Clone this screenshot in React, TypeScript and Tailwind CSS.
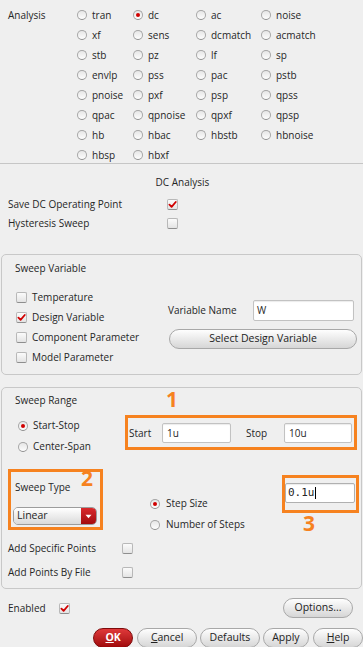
import React from "react";

const analyses = [
  ["tran", "dc", "ac", "noise"],
  ["xf", "sens", "dcmatch", "acmatch"],
  ["stb", "pz", "lf", "sp"],
  ["envlp", "pss", "pac", "pstb"],
  ["pnoise", "pxf", "psp", "qpss"],
  ["qpac", "qpnoise", "qpxf", "qpsp"],
  ["hb", "hbac", "hbstb", "hbnoise"],
  ["hbsp", "hbxf"],
];

function Radio({ checked = false }: { checked?: boolean }) {
  return (
    <span className="inline-flex h-[10px] w-[10px] shrink-0 items-center justify-center rounded-full border border-[#a6a6a6] border-b-[#8c8c8c] bg-linear-to-b from-[#e6e6e6] to-[#fdfdfd]">
      {checked && <span className="h-[4px] w-[4px] rounded-full bg-[#d00000]" />}
    </span>
  );
}

function Check({ checked = false }: { checked?: boolean }) {
  return (
    <span className="inline-flex h-[11px] w-[11px] shrink-0 items-center justify-center rounded-[2px] border border-[#b8b8b8] border-b-[#8e8e8e] bg-linear-to-b from-[#fbfbfb] to-[#e4e4e4]">
      {checked && (
        <svg width="9" height="9" viewBox="0 0 10 10">
          <path d="M1.6 5.2 L4 7.6 L8.6 2.2" fill="none" stroke="#d00000" strokeWidth="2" strokeLinecap="round" strokeLinejoin="round" />
        </svg>
      )}
    </span>
  );
}

function Field({ value, className = "" }: { value: string; className?: string }) {
  return (
    <div className={`flex items-center rounded-[2px] border border-[#c2c2c2] bg-white shadow-[inset_0_1px_1px_rgba(0,0,0,0.08)] ${className}`}>
      {value}
    </div>
  );
}

function Btn({ children, className = "" }: { children: React.ReactNode; className?: string }) {
  return (
    <button className={`flex h-[20px] items-center justify-center rounded-full border border-[#a8a8a8] bg-linear-to-b from-[#fefefe] to-[#d6d6d6] text-[10.5px] text-[#222] ${className}`}>
      {children}
    </button>
  );
}

export default function App() {
  return (
    <div className="relative flex h-[647px] w-[363px] flex-col overflow-hidden bg-[#efefef] font-['Open_Sans','Noto_Sans',sans-serif] text-[10px] text-[#262626]">
      {/* analysis chooser */}
      <div className="flex h-[163px] shrink-0 pt-[5px]">
        <div className="flex h-[20px] w-[77px] items-center pl-2">Analysis</div>
        <div className="grid h-[160px] grid-cols-[56px_63px_65px_1fr] auto-rows-[20px]">
          {analyses.flat().map((name) => (
            <div key={name} className="flex items-center gap-[5px]">
              <Radio checked={name === "dc"} />
              <span>{name}</span>
            </div>
          ))}
        </div>
      </div>
      <div className="h-px shrink-0 bg-[#c6c6c6]" />

      <div className="mt-[8px] flex h-[20px] shrink-0 items-center justify-center pl-[2px]">DC Analysis</div>
      <div className="mt-[2px] flex h-[20px] shrink-0 items-center pl-2">
        <span className="w-[159px]">Save DC Operating Point</span>
        <Check checked />
      </div>
      <div className="flex h-[18px] shrink-0 items-center pl-2">
        <span className="w-[159px]">Hysteresis Sweep</span>
        <Check />
      </div>

      {/* sweep variable */}
      <div className="mx-px mt-[22px] h-[121px] shrink-0 rounded-[5px] border border-[#c8c8c8]">
        <div className="flex h-[26px] items-center pl-[13px]">Sweep Variable</div>
        <div className="mt-[6px] flex">
          <div className="flex w-[166px] flex-col pl-[14px]">
            {[
              ["Temperature", false],
              ["Design Variable", true],
              ["Component Parameter", false],
              ["Model Parameter", false],
            ].map(([label, on]) => (
              <div key={label as string} className="flex h-[20px] items-center gap-[5px]">
                <Check checked={on as boolean} />
                <span>{label}</span>
              </div>
            ))}
          </div>
          <div className="flex flex-col pt-[13px]">
            <div className="flex h-[21px] items-center">
              <span className="w-[85px]">Variable Name</span>
              <Field value="W" className="h-[21px] w-[101px] pl-[3px]" />
            </div>
            <Btn className="mt-[8px] ml-px h-[17px] w-[188px]">Select Design Variable</Btn>
          </div>
        </div>
      </div>

      {/* sweep range */}
      <div className="mx-px mt-[12px] h-[202px] shrink-0 rounded-[5px] border border-[#c8c8c8]">
        <div className="flex h-[25px] items-center pl-[13px]">Sweep Range</div>
        <div className="flex h-[44px]">
          <div className="flex w-[125px] flex-col pt-[2px] pl-[16px]">
            <div className="flex h-[21px] items-center gap-[5px]">
              <Radio checked />
              <span>Start-Stop</span>
            </div>
            <div className="flex h-[21px] items-center gap-[5px]">
              <Radio />
              <span>Center-Span</span>
            </div>
          </div>
          <div className="mt-[10px] flex h-[20px] items-center pl-[2px]">
            <span className="w-[33px]">Start</span>
            <Field value="1u" className="h-[20px] w-[69px] pl-[4px]" />
            <span className="ml-[15px] w-[38px]">Stop</span>
            <Field value="10u" className="h-[20px] w-[68px] pl-[4px]" />
          </div>
        </div>
        <div className="flex h-[79px]">
          <div className="flex w-[148px] flex-col pl-[11px]">
            <div className="mt-[20px] flex h-[20px] items-center pl-[2px]">Sweep Type</div>
            <div className="mt-[10px] flex h-[18px] w-[84px] overflow-hidden rounded-[5px] border border-[#9c9c9c]">
              <div className="flex flex-1 items-center bg-linear-to-b from-[#ffffff] to-[#dadada] pl-[3px] text-[10.5px]">Linear</div>
              <div className="flex w-[15px] items-center justify-center bg-linear-to-b from-[#d9282b] to-[#a40a0d]">
                <svg width="7" height="5" viewBox="0 0 7 5">
                  <path d="M0.5 0.8 L6.5 0.8 L3.5 4.2 Z" fill="#fff" />
                </svg>
              </div>
            </div>
          </div>
          <div className="flex w-[135px] flex-col pt-[36px]">
            <div className="flex h-[21px] items-center gap-[6px]">
              <Radio checked />
              <span>Step Size</span>
            </div>
            <div className="flex h-[21px] items-center gap-[6px]">
              <Radio />
              <span>Number of Steps</span>
            </div>
          </div>
          <div className="pt-[26px]">
            <div className="flex h-[20px] w-[70px] items-center rounded-[2px] border border-[#b0b0b0] bg-white pl-[2px] font-['DejaVu_Sans_Mono',monospace] text-[11px] shadow-[inset_0_1px_1px_rgba(0,0,0,0.08)]">
              0.1u<span className="h-[12px] w-px bg-black" />
            </div>
          </div>
        </div>
        <div className="flex h-[24px] items-center pl-[6px]">
          <span className="w-[114px]">Add Specific Points</span>
          <Check />
        </div>
        <div className="flex h-[24px] items-center pl-[6px]">
          <span className="w-[114px]">Add Points By File</span>
          <Check />
        </div>
      </div>

      <div className="mt-[9px] flex h-[20px] shrink-0 items-center pl-2">
        <span className="w-[51px]">Enabled</span>
        <Check checked />
        <div className="flex-1" />
        <Btn className="mr-[10px] w-[70px]">Options...</Btn>
      </div>

      <div className="mt-[10px] flex h-[20px] shrink-0 pl-[93px]">
        <button className="flex h-[20px] w-[41px] items-center justify-center rounded-full border border-[#7d0b0b] bg-linear-to-b from-[#e0383a] to-[#a00709] text-[10.5px] font-bold text-white">
          <span className="underline">O</span>K
        </button>
        <Btn className="ml-[4px] w-[61px]">
          <span className="underline">C</span>ancel
        </Btn>
        <Btn className="ml-[3px] w-[61px]">Defaults</Btn>
        <Btn className="ml-[3px] w-[47px]">Apply</Btn>
        <Btn className="ml-[4px] w-[50px] shrink-0">
          <span className="underline">H</span>elp
        </Btn>
      </div>

      {/* annotation overlays */}
      <div className="pointer-events-none absolute top-[415px] left-[125px] h-[35px] w-[232px] border-[3px] border-[#f6821f]" />
      <div className="pointer-events-none absolute top-[469px] left-[8px] h-[61px] w-[95px] border-[3px] border-[#f6821f]" />
      <div className="pointer-events-none absolute top-[475px] left-[282px] h-[38px] w-[77px] border-[3px] border-[#f6821f]" />
      <div className="absolute top-[389px] left-[166px] font-['Open_Sans',sans-serif] text-[21px] leading-none font-bold text-[#f6821f]">1</div>
      <div className="absolute top-[468px] left-[81px] font-['Open_Sans',sans-serif] text-[21px] leading-none font-bold text-[#f6821f]">2</div>
      <div className="absolute top-[513px] left-[303px] font-['Open_Sans',sans-serif] text-[21px] leading-none font-bold text-[#f6821f]">3</div>
    </div>
  );
}
